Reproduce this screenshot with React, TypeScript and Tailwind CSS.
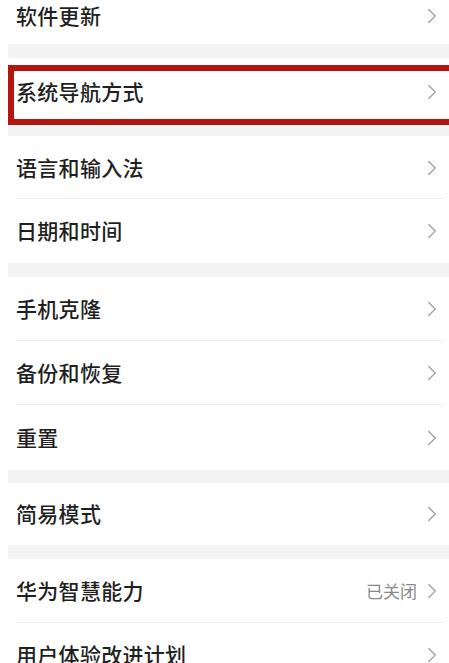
import { ChevronRight } from 'lucide-react'

interface RowProps {
  label: string
  value?: string
  divider?: boolean
  height?: string
}

function Row({ label, value, divider = false, height = 'h-[64px]' }: RowProps) {
  return (
    <div className={`relative flex items-center justify-between pl-2 pr-[4px] bg-white ${height}`}>
      <span className="text-[21px] font-medium text-[#1f1f1f] tracking-[0.3px]">{label}</span>
      <div className="flex items-center gap-[2px]">
        {value && <span className="text-[17px] text-[#8a8a8a]">{value}</span>}
        <ChevronRight className="w-[26px] h-[26px] text-[#a3a3a3]" strokeWidth={1.3} />
      </div>
      {divider && <div className="absolute bottom-0 left-2 right-[4px] h-px bg-[#ececec]" />}
    </div>
  )
}

function Band({ height = 'h-[15px]' }: { height?: string }) {
  return <div className={`bg-[#f4f4f4] ${height}`} />
}

export default function App() {
  return (
    <div
      className="w-[449px] h-[663px] overflow-hidden bg-white pl-2"
      style={{ fontFamily: '"Noto Sans CJK SC", "Noto Sans", sans-serif' }}
    >
      <div className="-mt-[12px]">
        <Row label="软件更新" height="h-[56px]" />
        <Band height="h-[14px]" />

        {/* highlighted row */}
        <div className="relative">
          <Row label="系统导航方式" height="h-[68px]" />
          <div className="absolute left-0 -right-2 top-[7px] h-[60px] border-[6px] border-[#b5150f]" />
        </div>
        <Band height="h-[10px]" />

        <Row label="语言和输入法" divider height="h-[63px]" />
        <Row label="日期和时间" />
        <Band height="h-[14px]" />

        <Row label="手机克隆" divider />
        <Row label="备份和恢复" divider />
        <Row label="重置" height="h-[65px]" />
        <Band height="h-[13px]" />

        <Row label="简易模式" height="h-[62px]" />
        <Band height="h-[14px]" />

        <Row label="华为智慧能力" value="已关闭" divider />
        <Row label="用户体验改进计划" />
      </div>
    </div>
  )
}
